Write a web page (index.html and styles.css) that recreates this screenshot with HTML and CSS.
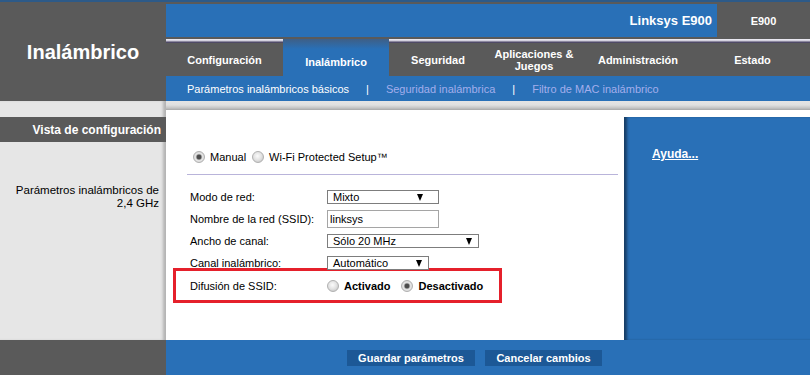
FILE: index.html
```html
<!DOCTYPE html>
<html>
<head>
    <title>Linksys E900 - Inalámbrico</title>
    <link rel="stylesheet" href="styles.css">
</head>
<body>
    <div class="topline"></div>

    <div class="masthead">
        <div class="brand">Inalámbrico</div>
        <div class="nav-area">
            <div class="product-row">
                <div class="product">Linksys E900</div>
                <div class="model">E900</div>
            </div>
            <div class="tabs">
                <div class="tab tab-config">Configuración</div>
                <div class="tab tab-wireless active">Inalámbrico</div>
                <div class="tab tab-security">Seguridad</div>
                <div class="tab tab-apps">Aplicaciones &amp;<br>Juegos</div>
                <div class="tab tab-admin">Administración</div>
                <div class="tab tab-status">Estado</div>
            </div>
            <div class="subnav">
                <span class="sub current">Parámetros inalámbricos básicos</span>
                <span class="sep">|</span>
                <span class="sub">Seguridad inalámbrica</span>
                <span class="sep">|</span>
                <span class="sub">Filtro de MAC inalámbrico</span>
            </div>
        </div>
    </div>

    <div class="main">
        <div class="sidebar">
            <div class="view-title">Vista de configuración</div>
            <div class="section-label">Parámetros inalámbricos de<br>2,4 GHz</div>
        </div>
        <div class="content">
            <div class="band"></div>
            <div class="panels">
                <div class="form">
                    <div class="mode-row">
                        <label class="radio"><input type="radio" name="mode" checked> Manual</label>
                        <label class="radio"><input type="radio" name="mode"> Wi-Fi Protected Setup™</label>
                    </div>
                    <div class="divider"></div>

                    <div class="row">
                        <span class="label">Modo de red:</span>
                        <span class="select select-mode">Mixto<i class="arrow"></i></span>
                    </div>
                    <div class="row">
                        <span class="label">Nombre de la red (SSID):</span>
                        <input class="text" type="text" value="linksys">
                    </div>
                    <div class="row">
                        <span class="label">Ancho de canal:</span>
                        <span class="select select-width">Sólo 20 MHz<i class="arrow"></i></span>
                    </div>
                    <div class="row">
                        <span class="label">Canal inalámbrico:</span>
                        <span class="select select-channel">Automático<i class="arrow"></i></span>
                    </div>
                    <div class="row ssid-box">
                        <span class="label">Difusión de SSID:</span>
                        <label class="radio bold"><input type="radio" name="ssid"> Activado</label>
                        <label class="radio bold"><input type="radio" name="ssid" checked> Desactivado</label>
                    </div>
                </div>
                <div class="help">
                    <a href="#" class="help-link">Ayuda...</a>
                </div>
            </div>
        </div>
    </div>

    <div class="footer">
        <div class="footer-left"></div>
        <div class="footer-right">
            <button class="btn">Guardar parámetros</button>
            <button class="btn">Cancelar cambios</button>
        </div>
    </div>
</body>
</html>
```

FILE: styles.css
```css
:root {
    --blue: #2970b7;
    --dark-blue: #1c5896;
    --gray: #5a5a5a;
    --light-gray: #e6e6e6;
    --lavender: #a3aeec;
}

body {
    margin: 0;
    width: 810px;
    font-family: "Liberation Sans", Arial, sans-serif;
    font-size: 11px;
    color: #000;
    background: var(--gray);
    overflow: hidden;
}

.topline {
    height: 2px;
    background: #2d5a88;
}

/* header */
.masthead {
    display: grid;
    grid-template-columns: 166px 1fr;
    height: 99px;
    background: var(--gray);
}

.brand {
    display: flex;
    align-items: center;
    justify-content: center;
    color: #fff;
    font-size: 20px;
    font-weight: bold;
    padding-top: 1px;
}

.nav-area {
    display: flex;
    flex-direction: column;
}

.product-row {
    display: flex;
    height: 33px;
    margin-top: 2px;
}

.product {
    flex: 1;
    background: var(--blue);
    color: #fff;
    font-size: 13px;
    font-weight: bold;
    display: flex;
    align-items: center;
    justify-content: flex-end;
    padding-right: 5px;
}

.model {
    width: 93px;
    color: #fff;
    font-weight: bold;
    display: flex;
    align-items: center;
    justify-content: center;
}

.tabs {
    display: flex;
    height: 39px;
}

.tab {
    display: flex;
    align-items: center;
    justify-content: center;
    text-align: center;
    color: #fff;
    font-weight: bold;
    line-height: 12px;
    padding-top: 6px;
    box-sizing: border-box;
    background: linear-gradient(to bottom, var(--gray) 0 2px, #f2f2f8 2px, #c9c6d6 4px, #4f4a66 5px, #4f4a66 6px, var(--gray) 6px);
}

.tab.active {
    padding-top: 10px;
    background: linear-gradient(to bottom, var(--gray) 0 2px, #3e5f86 2px, var(--blue) 12px);
}

.tab-config { width: 117px; }
.tab-wireless { width: 106px; }
.tab-security { width: 98px; }
.tab-apps { width: 94px; }
.tab-admin { width: 114px; }
.tab-status { flex: 1; }

.subnav {
    height: 25px;
    background: var(--blue);
    display: flex;
    align-items: center;
    gap: 17px;
    padding-left: 21px;
    color: var(--lavender);
}

.subnav .current,
.subnav .sep {
    color: #fff;
}

/* main area */
.main {
    display: grid;
    grid-template-columns: 166px 1fr;
    height: 239px;
}

.sidebar {
    background: var(--light-gray);
    padding-top: 16px;
    box-shadow: inset -4px 0 3px -1px rgba(0,0,0,0.22);
}

.view-title {
    height: 25px;
    background: var(--gray);
    color: #fff;
    font-size: 12px;
    font-weight: bold;
    display: flex;
    align-items: center;
    justify-content: flex-end;
    padding-right: 5px;
}

.section-label {
    margin-top: 42px;
    text-align: right;
    padding-right: 7px;
    font-size: 11.5px;
    line-height: 13px;
}

.content {
    background: #fff;
    display: flex;
    flex-direction: column;
}

.band {
    height: 9px;
    background: linear-gradient(to bottom, #e4e4e4 0, #e0e0e0 4px, #c4c4c4 7px, #a8a8a8 9px);
}

.panels {
    flex: 1;
    display: flex;
}

.form {
    width: 458px;
    box-sizing: border-box;
    padding: 39px 6px 0 21px;
}

.mode-row {
    display: flex;
    align-items: center;
    gap: 6px;
    height: 16px;
    padding-left: 6px;
}

.radio {
    display: inline-flex;
    align-items: center;
    gap: 5px;
}

.radio.bold {
    font-weight: bold;
    margin-right: 11px;
}

.radio input {
    appearance: none;
    -webkit-appearance: none;
    margin: 0;
    width: 12px;
    height: 12px;
    border-radius: 50%;
    border: 1px solid #b0b0b0;
    box-sizing: border-box;
    background: radial-gradient(circle at 45% 40%, #fbfbfb 0, #e2e2e2 4px, #cfcfcf 6px);
}

.radio input:checked {
    background: radial-gradient(circle, #4c4c4c 0 2px, #9a9a9a 2.6px, #dedede 3.4px, #e6e6e6 4px, #cccccc 6px);
}

.divider {
    height: 1px;
    background: #b9b4da;
    margin: 9px 0 11px;
}

.row {
    display: flex;
    align-items: center;
    height: 22px;
    padding-left: 3px;
}

.label {
    width: 137px;
    flex-shrink: 0;
}

.select {
    display: flex;
    align-items: center;
    justify-content: space-between;
    height: 14px;
    box-sizing: border-box;
    border: 1px solid #7d7d7d;
    padding: 0 6px 0 5px;
    background: #fff;
}

.select-mode { width: 112px; padding-right: 15px; }
.select-width { width: 152px; }
.select-channel { width: 102px; }

.arrow {
    width: 0;
    height: 0;
    border-left: 3px solid transparent;
    border-right: 3px solid transparent;
    border-top: 7px solid #000;
}

.text {
    width: 112px;
    height: 18px;
    box-sizing: border-box;
    border: 1px solid #a5a5a5;
    padding: 0 2px;
    font-family: inherit;
    font-size: 11px;
    outline: none;
}

.ssid-box {
    width: 329px;
    height: 35px;
    box-sizing: border-box;
    margin: -6px 0 0 -14px;
    padding-left: 14px;
    border: 3px solid #e5202b;
}

.help {
    flex: 1;
    margin-top: 7px;
    background: var(--blue);
    padding: 30px 0 0 28px;
    box-shadow: inset 4px 0 3px -1px rgba(0,0,0,0.45);
}

.help-link {
    color: #fff;
    font-size: 12px;
    font-weight: bold;
}

/* footer */
.footer {
    display: grid;
    grid-template-columns: 166px 1fr;
    height: 35px;
}

.footer-left {
    background: var(--gray);
}

.footer-right {
    background: var(--blue);
    display: flex;
    align-items: center;
    gap: 10px;
    padding-left: 181px;
}

.btn {
    height: 16px;
    border: none;
    padding: 0;
    background: var(--dark-blue);
    color: #fff;
    font-family: inherit;
    font-size: 11px;
    font-weight: bold;
    width: 128px;
}

.btn + .btn {
    width: 117px;
}
```
